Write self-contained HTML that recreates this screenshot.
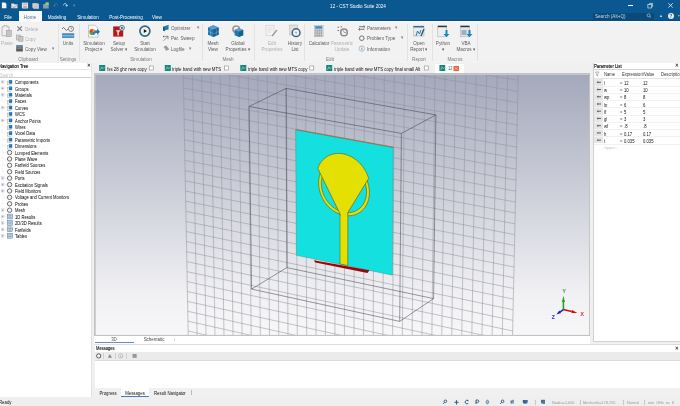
<!DOCTYPE html><html><head><meta charset="utf-8"><style>html,body{margin:0;padding:0;width:680px;height:406px;overflow:hidden;position:relative;background:#f0f0f0;font-family:"Liberation Sans",sans-serif}div{box-sizing:border-box}</style></head><body>
<div style="position:absolute;left:0;top:0;width:680px;height:406px;will-change:transform">
<div style="position:absolute;left:0px;top:0px;width:680px;height:21px;background:#0b5790;"></div>
<div style="position:absolute;left:0px;top:20px;width:680px;height:1px;background:#084a7c;"></div>
<div style="position:absolute;left:-44px;width:200px;text-align:center;top:1.10px;height:10px;line-height:10px;font-size:6.78px;color:#4f7ca6;font-weight:normal;white-space:pre;transform:scaleX(0.885);transform-origin:50% 50%;">↶</div>
<div style="position:absolute;left:-33.599999999999994px;width:200px;text-align:center;top:1.10px;height:10px;line-height:10px;font-size:6.78px;color:#dfe8f0;font-weight:normal;white-space:pre;transform:scaleX(0.885);transform-origin:50% 50%;">↷</div>
<div style="position:absolute;left:-26px;width:200px;text-align:center;top:1.10px;height:10px;line-height:10px;font-size:4.52px;color:#6a92b8;font-weight:normal;white-space:pre;transform:scaleX(0.885);transform-origin:50% 50%;">▾</div>
<div style="position:absolute;left:258.2px;width:200px;text-align:center;top:1.30px;height:10px;line-height:10px;font-size:5.20px;color:#ffffff;font-weight:normal;white-space:pre;transform:scaleX(0.885);transform-origin:50% 50%;letter-spacing:0">12 - CST Studio Suite 2024</div>
<div style="position:absolute;left:627.5px;top:5.2px;width:5.5px;height:0.8px;background:#ffffff;"></div>
<div style="position:absolute;left:593px;top:12.5px;width:61px;height:7px;background:#0a4a7a;"></div>
<div style="position:absolute;left:594.5px;top:11.10px;height:10px;line-height:10px;font-size:5.20px;color:#c7d6e4;font-weight:normal;white-space:pre;transform:scaleX(0.885);transform-origin:0 50%;">Search (Alt+Q)</div>
<div style="position:absolute;left:560.5px;width:200px;text-align:center;top:11.10px;height:10px;line-height:10px;font-size:3.95px;color:#d8e4ee;font-weight:normal;white-space:pre;transform:scaleX(0.885);transform-origin:50% 50%;">▲</div>
<div style="position:absolute;left:668px;top:12.5px;width:6px;height:6px;border-radius:50%;background:#e8eef4"></div>
<div style="position:absolute;left:571px;width:200px;text-align:center;top:10.70px;height:10px;line-height:10px;font-size:5.08px;color:#0b5790;font-weight:bold;white-space:pre;transform:scaleX(0.885);transform-origin:50% 50%;">?</div>
<div style="position:absolute;left:578.5px;width:200px;text-align:center;top:11.10px;height:10px;line-height:10px;font-size:3.95px;color:#9fb9d0;font-weight:normal;white-space:pre;transform:scaleX(0.885);transform-origin:50% 50%;">▾</div>
<div style="position:absolute;left:18.8px;top:11.4px;width:23.2px;height:10.6px;background:#f9f9f9;"></div>
<div style="position:absolute;left:-91.8px;width:200px;text-align:center;top:11.90px;height:10px;line-height:10px;font-size:5.20px;color:#ffffff;font-weight:normal;white-space:pre;transform:scaleX(0.885);transform-origin:50% 50%;">File</div>
<div style="position:absolute;left:-69.7px;width:200px;text-align:center;top:11.90px;height:10px;line-height:10px;font-size:5.20px;color:#4d7398;font-weight:normal;white-space:pre;transform:scaleX(0.885);transform-origin:50% 50%;">Home</div>
<div style="position:absolute;left:-43px;width:200px;text-align:center;top:11.90px;height:10px;line-height:10px;font-size:5.20px;color:#ffffff;font-weight:normal;white-space:pre;transform:scaleX(0.885);transform-origin:50% 50%;">Modeling</div>
<div style="position:absolute;left:-12px;width:200px;text-align:center;top:11.90px;height:10px;line-height:10px;font-size:5.20px;color:#ffffff;font-weight:normal;white-space:pre;transform:scaleX(0.885);transform-origin:50% 50%;">Simulation</div>
<div style="position:absolute;left:25.799999999999997px;width:200px;text-align:center;top:11.90px;height:10px;line-height:10px;font-size:5.20px;color:#ffffff;font-weight:normal;white-space:pre;transform:scaleX(0.885);transform-origin:50% 50%;">Post-Processing</div>
<div style="position:absolute;left:57.30000000000001px;width:200px;text-align:center;top:11.90px;height:10px;line-height:10px;font-size:5.20px;color:#ffffff;font-weight:normal;white-space:pre;transform:scaleX(0.885);transform-origin:50% 50%;">View</div>
<div style="position:absolute;left:0px;top:21px;width:680px;height:41.5px;background:#f2f2f2;"></div>
<div style="position:absolute;left:0px;top:20.8px;width:680px;height:1.4px;background:#fafafa;"></div>
<div style="position:absolute;left:0px;top:62.5px;width:680px;height:0.6px;background:#dcdcdc;"></div>
<div style="position:absolute;left:57.5px;top:23.5px;width:0.6px;height:37.5px;background:#e2e2e2;"></div>
<div style="position:absolute;left:79px;top:23.5px;width:0.6px;height:37.5px;background:#e2e2e2;"></div>
<div style="position:absolute;left:202.3px;top:23.5px;width:0.6px;height:37.5px;background:#e2e2e2;"></div>
<div style="position:absolute;left:254px;top:23.5px;width:0.6px;height:37.5px;background:#e2e2e2;"></div>
<div style="position:absolute;left:304.4px;top:23.5px;width:0.6px;height:37.5px;background:#e2e2e2;"></div>
<div style="position:absolute;left:406.5px;top:23.5px;width:0.6px;height:37.5px;background:#e2e2e2;"></div>
<div style="position:absolute;left:431.5px;top:23.5px;width:0.6px;height:37.5px;background:#e2e2e2;"></div>
<div style="position:absolute;left:477.4px;top:23.5px;width:0.6px;height:37.5px;background:#e2e2e2;"></div>
<div style="position:absolute;left:-72px;width:200px;text-align:center;top:54.10px;height:10px;line-height:10px;font-size:5.20px;color:#7a7a7a;font-weight:normal;white-space:pre;transform:scaleX(0.885);transform-origin:50% 50%;">Clipboard</div>
<div style="position:absolute;left:-32px;width:200px;text-align:center;top:54.10px;height:10px;line-height:10px;font-size:5.20px;color:#7a7a7a;font-weight:normal;white-space:pre;transform:scaleX(0.885);transform-origin:50% 50%;">Settings</div>
<div style="position:absolute;left:40.5px;width:200px;text-align:center;top:54.10px;height:10px;line-height:10px;font-size:5.20px;color:#7a7a7a;font-weight:normal;white-space:pre;transform:scaleX(0.885);transform-origin:50% 50%;">Simulation</div>
<div style="position:absolute;left:128px;width:200px;text-align:center;top:54.10px;height:10px;line-height:10px;font-size:5.20px;color:#7a7a7a;font-weight:normal;white-space:pre;transform:scaleX(0.885);transform-origin:50% 50%;">Mesh</div>
<div style="position:absolute;left:230px;width:200px;text-align:center;top:54.10px;height:10px;line-height:10px;font-size:5.20px;color:#7a7a7a;font-weight:normal;white-space:pre;transform:scaleX(0.885);transform-origin:50% 50%;">Edit</div>
<div style="position:absolute;left:319px;width:200px;text-align:center;top:54.10px;height:10px;line-height:10px;font-size:5.20px;color:#7a7a7a;font-weight:normal;white-space:pre;transform:scaleX(0.885);transform-origin:50% 50%;">Report</div>
<div style="position:absolute;left:354.5px;width:200px;text-align:center;top:54.10px;height:10px;line-height:10px;font-size:5.20px;color:#7a7a7a;font-weight:normal;white-space:pre;transform:scaleX(0.885);transform-origin:50% 50%;">Macros</div>
<div style="position:absolute;left:-93.4px;width:200px;text-align:center;top:38.30px;height:10px;line-height:10px;font-size:5.20px;color:#b0b0b0;font-weight:normal;white-space:pre;transform:scaleX(0.885);transform-origin:50% 50%;">Paste</div>
<div style="position:absolute;left:-32px;width:200px;text-align:center;top:38.30px;height:10px;line-height:10px;font-size:5.20px;color:#5a5a5a;font-weight:normal;white-space:pre;transform:scaleX(0.885);transform-origin:50% 50%;">Units</div>
<div style="position:absolute;left:-6px;width:200px;text-align:center;top:38.30px;height:10px;line-height:10px;font-size:5.20px;color:#5a5a5a;font-weight:normal;white-space:pre;transform:scaleX(0.885);transform-origin:50% 50%;">Simulation</div>
<div style="position:absolute;left:-6px;width:200px;text-align:center;top:44.40px;height:10px;line-height:10px;font-size:5.20px;color:#5a5a5a;font-weight:normal;white-space:pre;transform:scaleX(0.885);transform-origin:50% 50%;">Project ▾</div>
<div style="position:absolute;left:19px;width:200px;text-align:center;top:38.30px;height:10px;line-height:10px;font-size:5.20px;color:#5a5a5a;font-weight:normal;white-space:pre;transform:scaleX(0.885);transform-origin:50% 50%;">Setup</div>
<div style="position:absolute;left:19px;width:200px;text-align:center;top:44.40px;height:10px;line-height:10px;font-size:5.20px;color:#5a5a5a;font-weight:normal;white-space:pre;transform:scaleX(0.885);transform-origin:50% 50%;">Solver ▾</div>
<div style="position:absolute;left:45px;width:200px;text-align:center;top:38.30px;height:10px;line-height:10px;font-size:5.20px;color:#5a5a5a;font-weight:normal;white-space:pre;transform:scaleX(0.885);transform-origin:50% 50%;">Start</div>
<div style="position:absolute;left:45px;width:200px;text-align:center;top:44.40px;height:10px;line-height:10px;font-size:5.20px;color:#5a5a5a;font-weight:normal;white-space:pre;transform:scaleX(0.885);transform-origin:50% 50%;">Simulation</div>
<div style="position:absolute;left:113.30000000000001px;width:200px;text-align:center;top:38.30px;height:10px;line-height:10px;font-size:5.20px;color:#5a5a5a;font-weight:normal;white-space:pre;transform:scaleX(0.885);transform-origin:50% 50%;">Mesh</div>
<div style="position:absolute;left:113.30000000000001px;width:200px;text-align:center;top:44.40px;height:10px;line-height:10px;font-size:5.20px;color:#5a5a5a;font-weight:normal;white-space:pre;transform:scaleX(0.885);transform-origin:50% 50%;">View</div>
<div style="position:absolute;left:137.5px;width:200px;text-align:center;top:38.30px;height:10px;line-height:10px;font-size:5.20px;color:#5a5a5a;font-weight:normal;white-space:pre;transform:scaleX(0.885);transform-origin:50% 50%;">Global</div>
<div style="position:absolute;left:137.5px;width:200px;text-align:center;top:44.40px;height:10px;line-height:10px;font-size:5.20px;color:#5a5a5a;font-weight:normal;white-space:pre;transform:scaleX(0.885);transform-origin:50% 50%;">Properties ▾</div>
<div style="position:absolute;left:171.5px;width:200px;text-align:center;top:38.30px;height:10px;line-height:10px;font-size:5.20px;color:#b0b0b0;font-weight:normal;white-space:pre;transform:scaleX(0.885);transform-origin:50% 50%;">Edit</div>
<div style="position:absolute;left:171.5px;width:200px;text-align:center;top:44.40px;height:10px;line-height:10px;font-size:5.20px;color:#b0b0b0;font-weight:normal;white-space:pre;transform:scaleX(0.885);transform-origin:50% 50%;">Properties</div>
<div style="position:absolute;left:195px;width:200px;text-align:center;top:38.30px;height:10px;line-height:10px;font-size:5.20px;color:#5a5a5a;font-weight:normal;white-space:pre;transform:scaleX(0.885);transform-origin:50% 50%;">History</div>
<div style="position:absolute;left:195px;width:200px;text-align:center;top:44.40px;height:10px;line-height:10px;font-size:5.20px;color:#5a5a5a;font-weight:normal;white-space:pre;transform:scaleX(0.885);transform-origin:50% 50%;">List</div>
<div style="position:absolute;left:218.7px;width:200px;text-align:center;top:38.30px;height:10px;line-height:10px;font-size:5.20px;color:#5a5a5a;font-weight:normal;white-space:pre;transform:scaleX(0.885);transform-origin:50% 50%;">Calculator</div>
<div style="position:absolute;left:242px;width:200px;text-align:center;top:38.30px;height:10px;line-height:10px;font-size:5.20px;color:#b0b0b0;font-weight:normal;white-space:pre;transform:scaleX(0.885);transform-origin:50% 50%;">Parametric</div>
<div style="position:absolute;left:242px;width:200px;text-align:center;top:44.40px;height:10px;line-height:10px;font-size:5.20px;color:#b0b0b0;font-weight:normal;white-space:pre;transform:scaleX(0.885);transform-origin:50% 50%;">Update</div>
<div style="position:absolute;left:319px;width:200px;text-align:center;top:38.30px;height:10px;line-height:10px;font-size:5.20px;color:#5a5a5a;font-weight:normal;white-space:pre;transform:scaleX(0.885);transform-origin:50% 50%;">Open</div>
<div style="position:absolute;left:319px;width:200px;text-align:center;top:44.40px;height:10px;line-height:10px;font-size:5.20px;color:#5a5a5a;font-weight:normal;white-space:pre;transform:scaleX(0.885);transform-origin:50% 50%;">Report ▾</div>
<div style="position:absolute;left:343px;width:200px;text-align:center;top:38.30px;height:10px;line-height:10px;font-size:5.20px;color:#5a5a5a;font-weight:normal;white-space:pre;transform:scaleX(0.885);transform-origin:50% 50%;">Python</div>
<div style="position:absolute;left:343px;width:200px;text-align:center;top:44.40px;height:10px;line-height:10px;font-size:5.20px;color:#5a5a5a;font-weight:normal;white-space:pre;transform:scaleX(0.885);transform-origin:50% 50%;">▾</div>
<div style="position:absolute;left:366px;width:200px;text-align:center;top:38.30px;height:10px;line-height:10px;font-size:5.20px;color:#5a5a5a;font-weight:normal;white-space:pre;transform:scaleX(0.885);transform-origin:50% 50%;">VBA</div>
<div style="position:absolute;left:366px;width:200px;text-align:center;top:44.40px;height:10px;line-height:10px;font-size:5.20px;color:#5a5a5a;font-weight:normal;white-space:pre;transform:scaleX(0.885);transform-origin:50% 50%;">Macros ▾</div>
<div style="position:absolute;left:25px;top:23.60px;height:10px;line-height:10px;font-size:5.20px;color:#b0b0b0;font-weight:normal;white-space:pre;transform:scaleX(0.885);transform-origin:0 50%;">Delete</div>
<div style="position:absolute;left:25px;top:33.70px;height:10px;line-height:10px;font-size:5.20px;color:#b0b0b0;font-weight:normal;white-space:pre;transform:scaleX(0.885);transform-origin:0 50%;">Copy</div>
<div style="position:absolute;left:25px;top:44.10px;height:10px;line-height:10px;font-size:5.20px;color:#5a5a5a;font-weight:normal;white-space:pre;transform:scaleX(0.885);transform-origin:0 50%;">Copy View</div>
<div style="position:absolute;left:-47.5px;width:200px;text-align:center;top:44.10px;height:10px;line-height:10px;font-size:4.52px;color:#777777;font-weight:normal;white-space:pre;transform:scaleX(0.885);transform-origin:50% 50%;">▾</div>
<div style="position:absolute;left:171px;top:22.80px;height:10px;line-height:10px;font-size:5.20px;color:#5a5a5a;font-weight:normal;white-space:pre;transform:scaleX(0.885);transform-origin:0 50%;">Optimizer</div>
<div style="position:absolute;left:98px;width:200px;text-align:center;top:22.80px;height:10px;line-height:10px;font-size:4.52px;color:#777777;font-weight:normal;white-space:pre;transform:scaleX(0.885);transform-origin:50% 50%;">▾</div>
<div style="position:absolute;left:171px;top:33.40px;height:10px;line-height:10px;font-size:5.20px;color:#5a5a5a;font-weight:normal;white-space:pre;transform:scaleX(0.885);transform-origin:0 50%;">Par. Sweep</div>
<div style="position:absolute;left:171px;top:43.80px;height:10px;line-height:10px;font-size:5.20px;color:#5a5a5a;font-weight:normal;white-space:pre;transform:scaleX(0.885);transform-origin:0 50%;">Logfile</div>
<div style="position:absolute;left:90px;width:200px;text-align:center;top:43.80px;height:10px;line-height:10px;font-size:4.52px;color:#777777;font-weight:normal;white-space:pre;transform:scaleX(0.885);transform-origin:50% 50%;">▾</div>
<div style="position:absolute;left:367px;top:23.00px;height:10px;line-height:10px;font-size:5.20px;color:#5a5a5a;font-weight:normal;white-space:pre;transform:scaleX(0.885);transform-origin:0 50%;">Parameters</div>
<div style="position:absolute;left:296px;width:200px;text-align:center;top:23.00px;height:10px;line-height:10px;font-size:4.52px;color:#777777;font-weight:normal;white-space:pre;transform:scaleX(0.885);transform-origin:50% 50%;">▾</div>
<div style="position:absolute;left:367px;top:33.30px;height:10px;line-height:10px;font-size:5.20px;color:#5a5a5a;font-weight:normal;white-space:pre;transform:scaleX(0.885);transform-origin:0 50%;">Problem Type</div>
<div style="position:absolute;left:302px;width:200px;text-align:center;top:33.30px;height:10px;line-height:10px;font-size:4.52px;color:#777777;font-weight:normal;white-space:pre;transform:scaleX(0.885);transform-origin:50% 50%;">▾</div>
<div style="position:absolute;left:367px;top:43.70px;height:10px;line-height:10px;font-size:5.20px;color:#5a5a5a;font-weight:normal;white-space:pre;transform:scaleX(0.885);transform-origin:0 50%;">Information</div>
<div style="position:absolute;left:0px;top:63px;width:680px;height:343px;background:#f0f0f0;"></div>
<div style="position:absolute;left:0px;top:63px;width:91.4px;height:334.4px;background:#ffffff;"></div>
<div style="position:absolute;left:0px;top:397px;width:91.6px;height:0.6px;background:#d8d8d8;"></div>
<div style="position:absolute;left:0px;top:69.3px;width:91.4px;height:0.6px;background:#e6e6e6;"></div>
<div style="position:absolute;left:0px;top:76.8px;width:91.4px;height:0.8px;background:#cfcfcf;"></div>
<div style="position:absolute;left:91.4px;top:63px;width:0.5px;height:334px;background:#e2e2e2;"></div>
<div style="position:absolute;left:-0.9px;top:61.40px;height:10px;line-height:10px;font-size:5.04px;color:#000;font-weight:normal;white-space:pre;transform:scaleX(0.833);transform-origin:0 50%;-webkit-text-stroke:0.12px #000">Navigation Tree</div>
<div style="position:absolute;left:-11.5px;width:200px;text-align:center;top:61.00px;height:10px;line-height:10px;font-size:4.52px;color:#333;font-weight:bold;white-space:pre;transform:scaleX(0.885);transform-origin:50% 50%;">✕</div>
<div style="position:absolute;left:-0.5px;top:69.80px;height:10px;line-height:10px;font-size:4.98px;color:#c4c4c4;font-weight:normal;white-space:pre;transform:scaleX(0.833);transform-origin:0 50%;">Search</div>
<div style="position:absolute;left:15.1px;top:77.10px;height:10px;line-height:10px;font-size:5.19px;color:#000;font-weight:normal;white-space:pre;transform:scaleX(0.800);transform-origin:0 50%;">Components</div>
<div style="position:absolute;left:15.1px;top:83.51px;height:10px;line-height:10px;font-size:5.19px;color:#000;font-weight:normal;white-space:pre;transform:scaleX(0.800);transform-origin:0 50%;">Groups</div>
<div style="position:absolute;left:15.1px;top:89.92px;height:10px;line-height:10px;font-size:5.19px;color:#000;font-weight:normal;white-space:pre;transform:scaleX(0.800);transform-origin:0 50%;">Materials</div>
<div style="position:absolute;left:15.1px;top:96.33px;height:10px;line-height:10px;font-size:5.19px;color:#000;font-weight:normal;white-space:pre;transform:scaleX(0.800);transform-origin:0 50%;">Faces</div>
<div style="position:absolute;left:15.1px;top:102.74px;height:10px;line-height:10px;font-size:5.19px;color:#000;font-weight:normal;white-space:pre;transform:scaleX(0.800);transform-origin:0 50%;">Curves</div>
<div style="position:absolute;left:15.1px;top:109.15px;height:10px;line-height:10px;font-size:5.19px;color:#000;font-weight:normal;white-space:pre;transform:scaleX(0.800);transform-origin:0 50%;">WCS</div>
<div style="position:absolute;left:15.1px;top:115.56px;height:10px;line-height:10px;font-size:5.19px;color:#000;font-weight:normal;white-space:pre;transform:scaleX(0.800);transform-origin:0 50%;">Anchor Points</div>
<div style="position:absolute;left:15.1px;top:121.97px;height:10px;line-height:10px;font-size:5.19px;color:#000;font-weight:normal;white-space:pre;transform:scaleX(0.800);transform-origin:0 50%;">Wires</div>
<div style="position:absolute;left:15.1px;top:128.38px;height:10px;line-height:10px;font-size:5.19px;color:#000;font-weight:normal;white-space:pre;transform:scaleX(0.800);transform-origin:0 50%;">Voxel Data</div>
<div style="position:absolute;left:15.1px;top:134.79px;height:10px;line-height:10px;font-size:5.19px;color:#000;font-weight:normal;white-space:pre;transform:scaleX(0.800);transform-origin:0 50%;">Parametric Imports</div>
<div style="position:absolute;left:15.1px;top:141.20px;height:10px;line-height:10px;font-size:5.19px;color:#000;font-weight:normal;white-space:pre;transform:scaleX(0.800);transform-origin:0 50%;">Dimensions</div>
<div style="position:absolute;left:15.1px;top:147.61px;height:10px;line-height:10px;font-size:5.19px;color:#000;font-weight:normal;white-space:pre;transform:scaleX(0.800);transform-origin:0 50%;">Lumped Elements</div>
<div style="position:absolute;left:15.1px;top:154.02px;height:10px;line-height:10px;font-size:5.19px;color:#000;font-weight:normal;white-space:pre;transform:scaleX(0.800);transform-origin:0 50%;">Plane Wave</div>
<div style="position:absolute;left:15.1px;top:160.43px;height:10px;line-height:10px;font-size:5.19px;color:#000;font-weight:normal;white-space:pre;transform:scaleX(0.800);transform-origin:0 50%;">Farfield Sources</div>
<div style="position:absolute;left:15.1px;top:166.84px;height:10px;line-height:10px;font-size:5.19px;color:#000;font-weight:normal;white-space:pre;transform:scaleX(0.800);transform-origin:0 50%;">Field Sources</div>
<div style="position:absolute;left:15.1px;top:173.25px;height:10px;line-height:10px;font-size:5.19px;color:#000;font-weight:normal;white-space:pre;transform:scaleX(0.800);transform-origin:0 50%;">Ports</div>
<div style="position:absolute;left:15.1px;top:179.66px;height:10px;line-height:10px;font-size:5.19px;color:#000;font-weight:normal;white-space:pre;transform:scaleX(0.800);transform-origin:0 50%;">Excitation Signals</div>
<div style="position:absolute;left:15.1px;top:186.07px;height:10px;line-height:10px;font-size:5.19px;color:#000;font-weight:normal;white-space:pre;transform:scaleX(0.800);transform-origin:0 50%;">Field Monitors</div>
<div style="position:absolute;left:15.1px;top:192.48px;height:10px;line-height:10px;font-size:5.19px;color:#000;font-weight:normal;white-space:pre;transform:scaleX(0.800);transform-origin:0 50%;">Voltage and Current Monitors</div>
<div style="position:absolute;left:15.1px;top:198.89px;height:10px;line-height:10px;font-size:5.19px;color:#000;font-weight:normal;white-space:pre;transform:scaleX(0.800);transform-origin:0 50%;">Probes</div>
<div style="position:absolute;left:15.1px;top:205.30px;height:10px;line-height:10px;font-size:5.19px;color:#000;font-weight:normal;white-space:pre;transform:scaleX(0.800);transform-origin:0 50%;">Mesh</div>
<div style="position:absolute;left:15.1px;top:211.71px;height:10px;line-height:10px;font-size:5.19px;color:#000;font-weight:normal;white-space:pre;transform:scaleX(0.800);transform-origin:0 50%;">1D Results</div>
<div style="position:absolute;left:15.1px;top:218.12px;height:10px;line-height:10px;font-size:5.19px;color:#000;font-weight:normal;white-space:pre;transform:scaleX(0.800);transform-origin:0 50%;">2D/3D Results</div>
<div style="position:absolute;left:15.1px;top:224.53px;height:10px;line-height:10px;font-size:5.19px;color:#000;font-weight:normal;white-space:pre;transform:scaleX(0.800);transform-origin:0 50%;">Farfields</div>
<div style="position:absolute;left:15.1px;top:230.94px;height:10px;line-height:10px;font-size:5.19px;color:#000;font-weight:normal;white-space:pre;transform:scaleX(0.800);transform-origin:0 50%;">Tables</div>
<div style="position:absolute;left:106.8px;top:64.10px;height:10px;line-height:10px;font-size:5.26px;color:#111;font-weight:normal;white-space:pre;transform:scaleX(0.833);transform-origin:0 50%;">fss 28 ghz new copy</div>
<div style="position:absolute;left:172.4px;top:64.10px;height:10px;line-height:10px;font-size:5.26px;color:#111;font-weight:normal;white-space:pre;transform:scaleX(0.833);transform-origin:0 50%;">triple band with new MTS</div>
<div style="position:absolute;left:247.9px;top:64.10px;height:10px;line-height:10px;font-size:5.26px;color:#111;font-weight:normal;white-space:pre;transform:scaleX(0.833);transform-origin:0 50%;">triple band with new MTS copy</div>
<div style="position:absolute;left:333.8px;top:64.10px;height:10px;line-height:10px;font-size:5.26px;color:#111;font-weight:normal;white-space:pre;transform:scaleX(0.833);transform-origin:0 50%;">triple band with new MTS copy final small Alt</div>
<div style="position:absolute;left:434.8px;top:63.5px;width:29.5px;height:9.5px;background:#ffffff;"></div>
<div style="position:absolute;left:448.2px;top:64.10px;height:10px;line-height:10px;font-size:4.80px;color:#445566;font-weight:normal;white-space:pre;transform:scaleX(0.833);transform-origin:0 50%;">12</div>
<div style="position:absolute;left:94.4px;top:72.8px;width:496px;height:263.4px;background:#c2c2c2;"></div>
<div style="position:absolute;left:94.4px;top:336.2px;width:496px;height:8px;background:#ffffff;"></div>
<div style="position:absolute;left:94.6px;top:344px;width:585.4px;height:0.6px;background:#dddddd;"></div>
<div style="position:absolute;left:14px;width:200px;text-align:center;top:334.30px;height:10px;line-height:10px;font-size:5.03px;color:#555;font-weight:normal;white-space:pre;transform:scaleX(0.885);transform-origin:50% 50%;">3D</div>
<div style="position:absolute;left:94.6px;top:342.0px;width:39.6px;height:0.9px;background:#6a90b8;"></div>
<div style="position:absolute;left:54.30000000000001px;width:200px;text-align:center;top:334.30px;height:10px;line-height:10px;font-size:5.03px;color:#444;font-weight:normal;white-space:pre;transform:scaleX(0.885);transform-origin:50% 50%;">Schematic</div>
<div style="position:absolute;left:174px;top:337.5px;width:0.5px;height:3.5px;background:#d4d4d4;"></div>
<div style="position:absolute;left:592.6px;top:63px;width:87.4px;height:279px;background:#ffffff;border-left:0.6px solid #d0d0d0;border-bottom:0.6px solid #d0d0d0;box-sizing:border-box"></div>
<div style="position:absolute;left:594.1px;top:61.40px;height:10px;line-height:10px;font-size:5.10px;color:#000;font-weight:normal;white-space:pre;transform:scaleX(0.833);transform-origin:0 50%;-webkit-text-stroke:0.12px #000">Parameter List</div>
<div style="position:absolute;left:577.3px;width:200px;text-align:center;top:61.00px;height:10px;line-height:10px;font-size:4.52px;color:#333;font-weight:bold;white-space:pre;transform:scaleX(0.885);transform-origin:50% 50%;">✕</div>
<div style="position:absolute;left:593.5px;top:70.1px;width:86.5px;height:8px;background:#ffffff;"></div>
<div style="position:absolute;left:593.5px;top:69.1px;width:86.5px;height:0.9px;background:#d4d4d4;"></div>
<div style="position:absolute;left:603.6px;top:69.10px;height:10px;line-height:10px;font-size:5.04px;color:#333;font-weight:normal;white-space:pre;transform:scaleX(0.833);transform-origin:0 50%;">Name</div>
<div style="position:absolute;left:622.3px;top:69.10px;height:10px;line-height:10px;font-size:5.04px;color:#333;font-weight:normal;white-space:pre;transform:scaleX(0.833);transform-origin:0 50%;">Expression\Value</div>
<div style="position:absolute;left:661.3px;top:69.10px;height:10px;line-height:10px;font-size:5.04px;color:#333;font-weight:normal;white-space:pre;transform:scaleX(0.833);transform-origin:0 50%;">Description</div>
<div style="position:absolute;left:593.5px;top:78.2px;width:86.5px;height:0.6px;background:#e4e4e4;"></div>
<div style="position:absolute;left:593.8px;top:78.8px;width:8.8px;height:64.6px;background:#e6e6e6;"></div>
<div style="position:absolute;left:604.2px;top:77.90px;height:10px;line-height:10px;font-size:5.04px;color:#111;font-weight:normal;white-space:pre;transform:scaleX(0.833);transform-origin:0 50%;">l</div>
<div style="position:absolute;left:620.2px;top:77.90px;height:10px;line-height:10px;font-size:5.04px;color:#777;font-weight:normal;white-space:pre;transform:scaleX(0.833);transform-origin:0 50%;">=</div>
<div style="position:absolute;left:623.8px;top:77.90px;height:10px;line-height:10px;font-size:5.04px;color:#111;font-weight:normal;white-space:pre;transform:scaleX(0.833);transform-origin:0 50%;">12</div>
<div style="position:absolute;left:643.2px;top:77.90px;height:10px;line-height:10px;font-size:5.04px;color:#111;font-weight:normal;white-space:pre;transform:scaleX(0.833);transform-origin:0 50%;">12</div>
<div style="position:absolute;left:593.8px;top:85.8px;width:86.2px;height:0.5px;background:#f2f2f2;"></div>
<div style="position:absolute;left:604.2px;top:85.13px;height:10px;line-height:10px;font-size:5.04px;color:#111;font-weight:normal;white-space:pre;transform:scaleX(0.833);transform-origin:0 50%;">w</div>
<div style="position:absolute;left:620.2px;top:85.13px;height:10px;line-height:10px;font-size:5.04px;color:#777;font-weight:normal;white-space:pre;transform:scaleX(0.833);transform-origin:0 50%;">=</div>
<div style="position:absolute;left:623.8px;top:85.13px;height:10px;line-height:10px;font-size:5.04px;color:#111;font-weight:normal;white-space:pre;transform:scaleX(0.833);transform-origin:0 50%;">10</div>
<div style="position:absolute;left:643.2px;top:85.13px;height:10px;line-height:10px;font-size:5.04px;color:#111;font-weight:normal;white-space:pre;transform:scaleX(0.833);transform-origin:0 50%;">10</div>
<div style="position:absolute;left:593.8px;top:93.03px;width:86.2px;height:0.5px;background:#f2f2f2;"></div>
<div style="position:absolute;left:604.2px;top:92.36px;height:10px;line-height:10px;font-size:5.04px;color:#111;font-weight:normal;white-space:pre;transform:scaleX(0.833);transform-origin:0 50%;">wp</div>
<div style="position:absolute;left:620.2px;top:92.36px;height:10px;line-height:10px;font-size:5.04px;color:#777;font-weight:normal;white-space:pre;transform:scaleX(0.833);transform-origin:0 50%;">=</div>
<div style="position:absolute;left:623.8px;top:92.36px;height:10px;line-height:10px;font-size:5.04px;color:#111;font-weight:normal;white-space:pre;transform:scaleX(0.833);transform-origin:0 50%;">8</div>
<div style="position:absolute;left:643.2px;top:92.36px;height:10px;line-height:10px;font-size:5.04px;color:#111;font-weight:normal;white-space:pre;transform:scaleX(0.833);transform-origin:0 50%;">8</div>
<div style="position:absolute;left:593.8px;top:100.25999999999999px;width:86.2px;height:0.5px;background:#f2f2f2;"></div>
<div style="position:absolute;left:604.2px;top:99.59px;height:10px;line-height:10px;font-size:5.04px;color:#111;font-weight:normal;white-space:pre;transform:scaleX(0.833);transform-origin:0 50%;">lp</div>
<div style="position:absolute;left:620.2px;top:99.59px;height:10px;line-height:10px;font-size:5.04px;color:#777;font-weight:normal;white-space:pre;transform:scaleX(0.833);transform-origin:0 50%;">=</div>
<div style="position:absolute;left:623.8px;top:99.59px;height:10px;line-height:10px;font-size:5.04px;color:#111;font-weight:normal;white-space:pre;transform:scaleX(0.833);transform-origin:0 50%;">6</div>
<div style="position:absolute;left:643.2px;top:99.59px;height:10px;line-height:10px;font-size:5.04px;color:#111;font-weight:normal;white-space:pre;transform:scaleX(0.833);transform-origin:0 50%;">6</div>
<div style="position:absolute;left:593.8px;top:107.49px;width:86.2px;height:0.5px;background:#f2f2f2;"></div>
<div style="position:absolute;left:604.2px;top:106.82px;height:10px;line-height:10px;font-size:5.04px;color:#111;font-weight:normal;white-space:pre;transform:scaleX(0.833);transform-origin:0 50%;">lf</div>
<div style="position:absolute;left:620.2px;top:106.82px;height:10px;line-height:10px;font-size:5.04px;color:#777;font-weight:normal;white-space:pre;transform:scaleX(0.833);transform-origin:0 50%;">=</div>
<div style="position:absolute;left:623.8px;top:106.82px;height:10px;line-height:10px;font-size:5.04px;color:#111;font-weight:normal;white-space:pre;transform:scaleX(0.833);transform-origin:0 50%;">5</div>
<div style="position:absolute;left:643.2px;top:106.82px;height:10px;line-height:10px;font-size:5.04px;color:#111;font-weight:normal;white-space:pre;transform:scaleX(0.833);transform-origin:0 50%;">5</div>
<div style="position:absolute;left:593.8px;top:114.72px;width:86.2px;height:0.5px;background:#f2f2f2;"></div>
<div style="position:absolute;left:604.2px;top:114.05px;height:10px;line-height:10px;font-size:5.04px;color:#111;font-weight:normal;white-space:pre;transform:scaleX(0.833);transform-origin:0 50%;">gl</div>
<div style="position:absolute;left:620.2px;top:114.05px;height:10px;line-height:10px;font-size:5.04px;color:#777;font-weight:normal;white-space:pre;transform:scaleX(0.833);transform-origin:0 50%;">=</div>
<div style="position:absolute;left:623.8px;top:114.05px;height:10px;line-height:10px;font-size:5.04px;color:#111;font-weight:normal;white-space:pre;transform:scaleX(0.833);transform-origin:0 50%;">3</div>
<div style="position:absolute;left:643.2px;top:114.05px;height:10px;line-height:10px;font-size:5.04px;color:#111;font-weight:normal;white-space:pre;transform:scaleX(0.833);transform-origin:0 50%;">3</div>
<div style="position:absolute;left:593.8px;top:121.95px;width:86.2px;height:0.5px;background:#f2f2f2;"></div>
<div style="position:absolute;left:604.2px;top:121.28px;height:10px;line-height:10px;font-size:5.04px;color:#111;font-weight:normal;white-space:pre;transform:scaleX(0.833);transform-origin:0 50%;">wf</div>
<div style="position:absolute;left:620.2px;top:121.28px;height:10px;line-height:10px;font-size:5.04px;color:#777;font-weight:normal;white-space:pre;transform:scaleX(0.833);transform-origin:0 50%;">=</div>
<div style="position:absolute;left:623.8px;top:121.28px;height:10px;line-height:10px;font-size:5.04px;color:#111;font-weight:normal;white-space:pre;transform:scaleX(0.833);transform-origin:0 50%;">.8</div>
<div style="position:absolute;left:643.2px;top:121.28px;height:10px;line-height:10px;font-size:5.04px;color:#111;font-weight:normal;white-space:pre;transform:scaleX(0.833);transform-origin:0 50%;">.8</div>
<div style="position:absolute;left:593.8px;top:129.18px;width:86.2px;height:0.5px;background:#f2f2f2;"></div>
<div style="position:absolute;left:604.2px;top:128.51px;height:10px;line-height:10px;font-size:5.04px;color:#111;font-weight:normal;white-space:pre;transform:scaleX(0.833);transform-origin:0 50%;">h</div>
<div style="position:absolute;left:620.2px;top:128.51px;height:10px;line-height:10px;font-size:5.04px;color:#777;font-weight:normal;white-space:pre;transform:scaleX(0.833);transform-origin:0 50%;">=</div>
<div style="position:absolute;left:623.8px;top:128.51px;height:10px;line-height:10px;font-size:5.04px;color:#111;font-weight:normal;white-space:pre;transform:scaleX(0.833);transform-origin:0 50%;">0.17</div>
<div style="position:absolute;left:643.2px;top:128.51px;height:10px;line-height:10px;font-size:5.04px;color:#111;font-weight:normal;white-space:pre;transform:scaleX(0.833);transform-origin:0 50%;">0.17</div>
<div style="position:absolute;left:593.8px;top:136.41px;width:86.2px;height:0.5px;background:#f2f2f2;"></div>
<div style="position:absolute;left:604.2px;top:135.74px;height:10px;line-height:10px;font-size:5.04px;color:#111;font-weight:normal;white-space:pre;transform:scaleX(0.833);transform-origin:0 50%;">t</div>
<div style="position:absolute;left:620.2px;top:135.74px;height:10px;line-height:10px;font-size:5.04px;color:#777;font-weight:normal;white-space:pre;transform:scaleX(0.833);transform-origin:0 50%;">=</div>
<div style="position:absolute;left:623.8px;top:135.74px;height:10px;line-height:10px;font-size:5.04px;color:#111;font-weight:normal;white-space:pre;transform:scaleX(0.833);transform-origin:0 50%;">0.035</div>
<div style="position:absolute;left:643.2px;top:135.74px;height:10px;line-height:10px;font-size:5.04px;color:#111;font-weight:normal;white-space:pre;transform:scaleX(0.833);transform-origin:0 50%;">0.035</div>
<div style="position:absolute;left:593.8px;top:143.64px;width:86.2px;height:0.5px;background:#f2f2f2;"></div>
<div style="position:absolute;left:604px;top:143.20px;height:10px;line-height:10px;font-size:4.07px;color:#bdbdbd;font-weight:normal;white-space:pre;transform:scaleX(0.885);transform-origin:0 50%;">&lt;type&gt;...</div>
<div style="position:absolute;left:94.6px;top:344.6px;width:585.4px;height:52.6px;background:#ffffff;"></div>
<div style="position:absolute;left:95.7px;top:343.50px;height:10px;line-height:10px;font-size:4.92px;color:#000;font-weight:normal;white-space:pre;transform:scaleX(0.833);transform-origin:0 50%;-webkit-text-stroke:0.08px #000">Messages</div>
<div style="position:absolute;left:577px;width:200px;text-align:center;top:343.70px;height:10px;line-height:10px;font-size:4.52px;color:#333;font-weight:bold;white-space:pre;transform:scaleX(0.885);transform-origin:50% 50%;">✕</div>
<div style="position:absolute;left:94.6px;top:352.2px;width:585.4px;height:7.6px;background:#ebebeb;"></div>
<div style="position:absolute;left:94.6px;top:359.8px;width:585.4px;height:0.5px;background:#dcdcdc;"></div>
<div style="position:absolute;left:102.5px;top:352.8px;width:0.5px;height:6px;background:#d0d0d0;"></div>
<div style="position:absolute;left:114.5px;top:352.8px;width:0.5px;height:6px;background:#d0d0d0;"></div>
<div style="position:absolute;left:125.5px;top:352.8px;width:0.5px;height:6px;background:#d0d0d0;"></div>
<div style="position:absolute;left:94.6px;top:388.2px;width:585.4px;height:9px;background:#f0f0f0;"></div>
<div style="position:absolute;left:120.8px;top:388.2px;width:27.9px;height:8.5px;background:#ffffff;"></div>
<div style="position:absolute;left:120.8px;top:396.2px;width:27.9px;height:0.7px;background:#4a7bb0;"></div>
<div style="position:absolute;left:7.599999999999994px;width:200px;text-align:center;top:388.70px;height:10px;line-height:10px;font-size:4.86px;color:#111;font-weight:normal;white-space:pre;transform:scaleX(0.885);transform-origin:50% 50%;">Progress</div>
<div style="position:absolute;left:34.80000000000001px;width:200px;text-align:center;top:388.80px;height:10px;line-height:10px;font-size:4.86px;color:#111;font-weight:normal;white-space:pre;transform:scaleX(0.885);transform-origin:50% 50%;">Messages</div>
<div style="position:absolute;left:154px;top:388.70px;height:10px;line-height:10px;font-size:4.86px;color:#111;font-weight:normal;white-space:pre;transform:scaleX(0.885);transform-origin:0 50%;">Result Navigator</div>
<div style="position:absolute;left:190.5px;top:390px;width:0.5px;height:5px;background:#bbbbbb;"></div>
<div style="position:absolute;left:0px;top:397.2px;width:680px;height:8.8px;background:#efefef;"></div>
<div style="position:absolute;left:-0.8px;top:398.10px;height:10px;line-height:10px;font-size:4.86px;color:#111;font-weight:normal;white-space:pre;transform:scaleX(0.885);transform-origin:0 50%;">Ready</div>
<div style="position:absolute;left:551.5px;top:397.70px;height:10px;line-height:10px;font-size:4.24px;color:#9a9a9a;font-weight:normal;white-space:pre;transform:scaleX(0.885);transform-origin:0 50%;">Nodes=1,000</div>
<div style="position:absolute;left:583.3px;top:397.70px;height:10px;line-height:10px;font-size:4.24px;color:#9a9a9a;font-weight:normal;white-space:pre;transform:scaleX(0.885);transform-origin:0 50%;">Meshcells=178,720</div>
<div style="position:absolute;left:626.5px;top:397.70px;height:10px;line-height:10px;font-size:4.24px;color:#9a9a9a;font-weight:normal;white-space:pre;transform:scaleX(0.885);transform-origin:0 50%;">Normal</div>
<div style="position:absolute;left:647.5px;top:397.70px;height:10px;line-height:10px;font-size:4.24px;color:#9a9a9a;font-weight:normal;white-space:pre;transform:scaleX(0.885);transform-origin:0 50%;">mm  GHz  ns  K</div>
<div style="position:absolute;left:535px;top:399.5px;width:0.5px;height:5px;background:#c8c8c8;"></div>
<div style="position:absolute;left:580px;top:399.5px;width:0.5px;height:5px;background:#c8c8c8;"></div>
<div style="position:absolute;left:623px;top:399.5px;width:0.5px;height:5px;background:#c8c8c8;"></div>
<div style="position:absolute;left:644px;top:399.5px;width:0.5px;height:5px;background:#c8c8c8;"></div>
<svg style="position:absolute;left:0;top:0" width="680" height="406" viewBox="0 0 680 406"><defs><linearGradient id="bg" x1="0" y1="0" x2="0" y2="1"><stop offset="0" stop-color="#a3a8bb"/><stop offset="0.5" stop-color="#d1d3dc"/><stop offset="0.85" stop-color="#f1f1f4"/><stop offset="1" stop-color="#f7f7f8"/></linearGradient><clipPath id="vc"><rect x="95.7" y="73.9" width="493.40000000000003" height="261.0"/></clipPath></defs><rect x="95.7" y="73.9" width="493.40000000000003" height="261.0" fill="url(#bg)"/><g clip-path="url(#vc)"><path d="M181.54 -17.63L189.05 379.79M190.85 -16.18L197.92 381.89M200.19 -14.73L206.83 384.00M209.56 -13.27L215.76 386.11M218.97 -11.80L224.73 388.24M228.42 -10.33L233.73 390.37M237.91 -8.85L242.77 392.51M247.43 -7.37L251.84 394.65M256.98 -5.88L260.94 396.81M266.58 -4.38L270.07 398.97M276.21 -2.88L279.24 401.14M285.88 -1.38L288.44 403.32M295.59 0.14L297.68 405.51M305.33 1.65L306.95 407.71M315.11 3.18L316.25 409.91M324.93 4.71L325.59 412.12M334.79 6.25L334.96 414.34M344.69 7.79L344.37 416.57M354.63 9.34L353.82 418.80M364.60 10.89L363.30 421.05M374.62 12.45L372.81 423.30M384.68 14.02L382.36 425.56M394.77 15.59L391.95 427.83M404.91 17.17L401.57 430.11M415.08 18.76L411.23 432.40M425.30 20.35L420.93 434.70M435.56 21.95L430.66 437.00M445.85 23.55L440.43 439.31M456.19 25.16L450.24 441.64M466.58 26.78L460.08 443.97M477.00 28.40L469.97 446.31M487.46 30.03L479.89 448.66M497.97 31.67L489.84 451.02M508.52 33.31L499.84 453.38M519.12 34.96L509.88 455.76M181.54 -17.63L519.12 34.96M181.74 -6.94L518.87 46.32M181.95 3.72L518.62 57.64M182.15 14.35L518.37 68.94M182.35 24.96L518.12 80.20M182.55 35.54L517.88 91.43M182.75 46.09L517.63 102.63M182.95 56.62L517.38 113.80M183.14 67.12L517.14 124.93M183.34 77.59L516.90 136.04M183.54 88.04L516.65 147.12M183.74 98.46L516.41 158.17M183.93 108.85L516.17 169.19M184.13 119.21L515.93 180.17M184.32 129.55L515.69 191.13M184.52 139.87L515.45 202.06M184.71 150.15L515.21 212.96M184.91 160.42L514.97 223.83M185.10 170.65L514.73 234.67M185.29 180.86L514.49 245.48M185.49 191.05L514.26 256.26M185.68 201.20L514.02 267.02M185.87 211.34L513.78 277.74M186.06 221.45L513.55 288.44M186.25 231.53L513.32 299.10M186.44 241.58L513.08 309.74M186.63 251.62L512.85 320.35M186.82 261.62L512.62 330.94M187.01 271.61L512.39 341.49M187.20 281.56L512.15 352.02M187.38 291.49L511.92 362.51M187.57 301.40L511.69 372.98M187.76 311.29L511.46 383.43M187.94 321.14L511.24 393.84M188.13 330.98L511.01 404.23M188.32 340.79L510.78 414.59M188.50 350.57L510.55 424.92M188.69 360.34L510.33 435.23M188.87 370.07L510.10 445.51M189.05 379.79L509.88 455.76" stroke="#8e9098" stroke-opacity="0.68" stroke-width="0.75" fill="none"/><polygon points="295.68,129.67 393.27,147.41 392.41,275.17 296.34,255.30" fill="#14e0e0" stroke="#3a8a80" stroke-width="0.4"/><path d="M295.68 129.67 L393.27 147.41" stroke="#9a6a3a" stroke-width="0.8"/><path d="M369.41 192.68L369.30 195.08L369.00 197.43L368.51 199.70L367.83 201.87L366.97 203.94L365.93 205.88L364.72 207.68L363.36 209.32L361.85 210.81L360.20 212.11L358.43 213.23L356.55 214.15L354.58 214.88L352.53 215.39L350.42 215.70L348.25 215.79L346.06 215.67L343.85 215.34L341.65 214.80L339.46 214.06L337.31 213.12L335.21 211.98L333.17 210.67L331.22 209.18L329.36 207.53L327.62 205.74L326.00 203.80L324.51 201.75L323.17 199.59L321.99 197.34L320.97 195.02L320.13 192.65L319.46 190.23L318.98 187.80L318.69 185.37L318.59 182.95L318.68 180.57L318.96 178.24L319.43 175.99L320.09 173.82L320.92 171.75L321.93 169.81L323.11 168.00L324.45 166.33L325.94 164.83L327.56 163.51L329.31 162.36L331.18 161.41L333.14 160.66L335.19 160.11L337.30 159.78L339.47 159.66L341.67 159.75L343.89 160.06L346.11 160.58L348.32 161.30L350.50 162.24L352.62 163.36L354.68 164.68L356.66 166.17L358.55 167.83L360.32 169.64L361.96 171.59L363.47 173.67L364.83 175.85L366.02 178.13L367.05 180.48L367.90 182.88L368.56 185.33L369.04 187.79L369.32 190.24ZM366.49 189.97L366.24 187.79L365.82 185.60L365.22 183.43L364.47 181.29L363.56 179.20L362.49 177.18L361.29 175.24L359.95 173.39L358.49 171.66L356.91 170.05L355.24 168.57L353.48 167.25L351.65 166.08L349.76 165.08L347.83 164.25L345.87 163.60L343.89 163.14L341.91 162.86L339.96 162.78L338.03 162.88L336.15 163.18L334.33 163.66L332.58 164.33L330.93 165.18L329.37 166.19L327.92 167.37L326.60 168.71L325.41 170.18L324.36 171.79L323.46 173.52L322.71 175.36L322.13 177.29L321.71 179.30L321.46 181.37L321.37 183.49L321.46 185.64L321.72 187.80L322.15 189.96L322.74 192.11L323.49 194.23L324.40 196.29L325.45 198.29L326.64 200.21L327.97 202.04L329.41 203.76L330.96 205.36L332.61 206.83L334.35 208.15L336.16 209.32L338.03 210.33L339.95 211.16L341.89 211.82L343.85 212.30L345.82 212.59L347.77 212.70L349.69 212.61L351.57 212.34L353.40 211.88L355.15 211.24L356.82 210.41L358.39 209.42L359.85 208.26L361.20 206.94L362.41 205.47L363.48 203.87L364.40 202.14L365.17 200.31L365.77 198.37L366.21 196.36L366.48 194.27L366.57 192.14Z" fill="#e4e004" fill-rule="evenodd" stroke="#5e6a2a" stroke-width="0.7"/><polygon points="340.09,209.67 347.82,211.19 347.76,265.42 340.07,263.83" fill="#e4e004" stroke="#5e6a2a" stroke-width="0.7"/><path d="M343.17 220.23L317.74 168.35L318.35 166.80L319.06 165.31L319.86 163.89L320.74 162.54L321.71 161.27L322.75 160.08L323.88 158.98L325.07 157.96L326.34 157.04L327.66 156.22L329.05 155.50L330.49 154.88L331.97 154.37L333.50 153.96L335.07 153.67L336.66 153.49L338.28 153.42L339.92 153.46L341.58 153.61L343.24 153.88L344.90 154.25L346.55 154.74L348.19 155.33L349.81 156.03L351.41 156.84L352.98 157.74L354.51 158.74L356.00 159.83L357.44 161.01L358.82 162.28L360.15 163.63L361.41 165.05L362.60 166.54L363.72 168.09L364.77 169.70L365.73 171.37L366.60 173.08L367.39 174.82L368.08 176.60L368.68 178.41Z" fill="#e4e004" stroke="#5e6a2a" stroke-width="0.7"/><polygon points="340.76,206.66 347.15,207.91 347.09,264.76 340.75,263.45" fill="#e4e004"/><polygon points="313.6,260.2 369.6,270.3 367.4,273.0 315.4,262.6" fill="#9a0606"/><path d="M249.1 106.5L401.4 133.4M401.4 133.4L399.7 321.4M399.7 321.4L251.6 289.1M251.6 289.1L249.1 106.5M286.1 88.4L435.9 114.9M435.9 114.9L433.6 298.6M433.6 298.6L286.8 267.6M286.8 267.6L286.1 88.4M249.1 106.5L286.1 88.4M401.4 133.4L435.9 114.9M251.6 289.1L286.8 267.6M399.7 321.4L433.6 298.6" stroke="#404048" stroke-opacity="0.75" stroke-width="0.7" fill="none"/></g><rect x="95.7" y="73.9" width="493.40000000000003" height="1" fill="#d4d4d8" fill-opacity="0.8"/><path d="M563.4 309.6 L563.40 302.01" stroke="#12a812" stroke-width="1.5"/><path d="M564.90 302.01 L563.4 295.8 L561.90 302.01z" fill="#12a812"/><path d="M563.4 309.6 L571.80 311.58" stroke="#c01414" stroke-width="1.5"/><path d="M571.46 313.04 L577.4 312.9 L572.14 310.12z" fill="#c01414"/><path d="M563.4 309.6 L560.25 311.76" stroke="#1a1ab8" stroke-width="1.5"/><path d="M559.40 310.52 L556.4 314.4 L561.10 313.00z" fill="#1a1ab8"/><text x="564.2" y="292.8" font-size="5" fill="#22a022" stroke="#22a022" stroke-width="0.15" text-anchor="middle" font-family="Liberation Sans">Y</text><text x="582.2" y="315.8" font-size="5" fill="#d81c1c" stroke="#d81c1c" stroke-width="0.15" text-anchor="middle" font-family="Liberation Sans">X</text><text x="553.2" y="318.6" font-size="5" fill="#2222d8" stroke="#2222d8" stroke-width="0.15" text-anchor="middle" font-family="Liberation Sans">Z</text></svg>
<svg style="position:absolute;left:0;top:0" width="680" height="406" viewBox="0 0 680 406"><path d="M1.9 2.5 h3.2 l1.3 1.3 v4.5 h-4.5z" fill="#f4f2ee"/><path d="M11.3 3.4 h2.4 l0.8 0.8 h3 v4 h-6.2z" fill="#e9dcdc"/><path d="M12.6 6.6 l1.5 1.2 l3 -3.2" stroke="#5f8fc0" stroke-width="0.7" fill="none"/><rect x="21.9" y="2.6" width="6.2" height="5.8" fill="#e6dede"/><rect x="22.8" y="3.2" width="4.4" height="2" fill="#c9c0c0"/><rect x="23.2" y="6" width="3.6" height="2.4" fill="#b8b0b0"/><rect x="32.4" y="3.2" width="5.2" height="4.6" fill="#d8c8c4"/><rect x="33.6" y="4" width="5.2" height="4.6" fill="#d0c2bc" stroke="#e6dada" stroke-width="0.4"/><rect x="43.1" y="4" width="5.6" height="4.5" fill="#8a9aae"/><path d="M45.5 2.4 h3.3 v2.2 h-3.3z" fill="#b8cc50"/><rect x="647.9" y="4.4" width="3.6" height="3.6" fill="none" stroke="#fff" stroke-width="0.6"/><path d="M649.1 3.4 h3.5 v3.5" fill="none" stroke="#fff" stroke-width="0.6"/><path d="M668.4 3.2 L672.8 7.6 M672.8 3.2 L668.4 7.6" stroke="#fff" stroke-width="0.75"/><circle cx="648.6" cy="15.3" r="1.5" fill="none" stroke="#c7d6e4" stroke-width="0.6"/><path d="M649.7 16.4 l1.3 1.3" stroke="#c7d6e4" stroke-width="0.7"/><path d="M2 26.8 h2 v-1.2 h3 v1.2 h2 v9 h-7z" fill="#f0f0f0" stroke="#a8a8a8" stroke-width="0.8"/><rect x="6.2" y="30.2" width="5.2" height="6.4" fill="#c4c4c4" stroke="#9c9c9c" stroke-width="0.5"/><path d="M17.4 26.4 L21.9 30.9 M21.9 26.4 L17.4 30.9" stroke="#777" stroke-width="1.1"/><rect x="16.3" y="35" width="4.2" height="5" fill="#d8d8d8" stroke="#a0a0a0" stroke-width="0.6"/><rect x="18.8" y="36.4" width="4.2" height="4.8" fill="#c8c8c8" stroke="#9a9a9a" stroke-width="0.6"/><rect x="16.2" y="45.2" width="6.6" height="1.5" fill="#3d6f9c"/><rect x="16.2" y="46.7" width="6.6" height="4.8" fill="#5a5a5a"/><rect x="16.8" y="47.4" width="5.4" height="1.4" fill="#8a8a8a"/><path d="M62 29 q1.5 -3 3 0 t3 0" stroke="#555" stroke-width="0.8" fill="none"/><circle cx="71" cy="28.8" r="2.6" fill="#f3f3f3" stroke="#555" stroke-width="0.7"/><path d="M71 27.3 v1.5 h1.2" stroke="#555" stroke-width="0.5" fill="none"/><rect x="62" y="33.2" width="12.2" height="4.8" fill="#4a8fbf"/><rect x="62" y="35.2" width="12.2" height="1.2" fill="#86bde0"/><path d="M88.5 25.2 h6.5 l3 3 v9 h-9.5 z" fill="#f7f7f7" stroke="#9a9a9a" stroke-width="0.5"/><circle cx="92.5" cy="32" r="3" fill="#e9a020"/><path d="M92.5 32 L89.5 32 A3 3 0 0 1 92.5 29 z" fill="#e23c2a"/><path d="M92.5 32 L92.5 35 A3 3 0 0 1 89.5 32 z" fill="#3aa845"/><path d="M92.5 32 L95.5 32 A3 3 0 0 1 92.5 35 z" fill="#2a7fd4"/><path d="M94.5 30.5 h2.5 v-1.8 l3 3 l-3 3 v-1.8 h-2.5 z" fill="#1c7cc0"/><rect x="113.2" y="26.4" width="10" height="10.2" fill="#b81818"/><path d="M115.8 30.2 h4.6 l-1.6 2.2 v3 h-1.4 v-3 z" fill="#f3e2e2"/><circle cx="121.9" cy="27.9" r="2.5" fill="#dfe6ea" stroke="#4f7f96" stroke-width="1"/><circle cx="121.9" cy="27.9" r="0.9" fill="#333"/><circle cx="144.9" cy="31.1" r="5.0" fill="#f2f2f2" stroke="#2c6a8c" stroke-width="1.7"/><circle cx="144.9" cy="31.1" r="3.5" fill="#f6f2ea"/><path d="M143.8 29.2 L147 31.1 L143.8 33 z" fill="#111"/><path d="M163 26.8 l5.6 -2 v4.6 l-5.6 1.4 z" fill="#2a7ab0"/><path d="M163 26.8 l1.8 0.3 v4.2 l-1.8 -0.5z" fill="#1a5a7a"/><path d="M163.5 40.8 l4.5 -4.5 M165 36.3 h3 v3" stroke="#555" stroke-width="0.6" fill="none"/><circle cx="163.8" cy="36.6" r="0.8" fill="#555"/><path d="M163.8 46.5 l2.5 -1 l3 4 l-2.5 1 z" fill="#9a9a9a"/><path d="M164 46.8 l2.6 4.2" stroke="#777" stroke-width="0.5"/><path d="M208 27.5 l5.3 -2.3 l5.3 2.3 v7.3 l-5.3 2.2 l-5.3 -2.2 z" fill="#2576aa"/><path d="M208 27.5 l5.3 2.3 l5.3 -2.3 l-5.3 -2.3 z" fill="#5a9fcf"/><path d="M213.3 29.8 v7.2 l5.3 -2.2 v-7.3 z" fill="#1a5e8e"/><path d="M210.7 28.8 v7.5 M216.3 28.8 v7.5 M208 31.3 l5.5 2.5 l5.5 -2.5" stroke="#a9d6f2" stroke-width="0.35" fill="none"/><circle cx="236.2" cy="29.2" r="3.2" fill="none" stroke="#9a9a9a" stroke-width="1.7"/><path d="M234.6 30 l4.3 -1.8 l4.3 1.8 v5.3 l-4.3 1.7 l-4.3 -1.7 z" fill="#2576aa"/><path d="M234.6 30 l4.3 1.8 l4.3 -1.8 l-4.3 -1.8 z" fill="#5a9fcf"/><path d="M238.9 31.8 v5.2 l4.3 -1.7 v-5.3 z" fill="#1a5e8e"/><rect x="266" y="25.5" width="8" height="10" fill="#f4f4f4" stroke="#c4c4c4" stroke-width="0.5"/><path d="M267.5 28 h5 M267.5 30 h5 M267.5 32 h3" stroke="#c8c8c8" stroke-width="0.5"/><path d="M272 36 l5 -6" stroke="#9d9d9d" stroke-width="1.3"/><rect x="289.3" y="25" width="8.4" height="10" fill="#e4dede" stroke="#c0b8b8" stroke-width="0.5"/><circle cx="296.1" cy="32.7" r="3.9" fill="#eef0f2" stroke="#3a6680" stroke-width="1.5"/><path d="M295.8 31.6 v1.4 h1.2" stroke="#333" stroke-width="0.45" fill="none"/><rect x="314.3" y="25.3" width="8.8" height="11.5" fill="#dadada" stroke="#b0b0b0" stroke-width="0.5"/><rect x="315.2" y="26.2" width="7" height="2.5" fill="#3a8fd0"/><rect x="315.20" y="29.60" width="1.4" height="1.3" fill="#9a9a9a"/><rect x="315.20" y="31.40" width="1.4" height="1.3" fill="#9a9a9a"/><rect x="315.20" y="33.20" width="1.4" height="1.3" fill="#9a9a9a"/><rect x="315.20" y="35.00" width="1.4" height="1.3" fill="#9a9a9a"/><rect x="317.05" y="29.60" width="1.4" height="1.3" fill="#9a9a9a"/><rect x="317.05" y="31.40" width="1.4" height="1.3" fill="#9a9a9a"/><rect x="317.05" y="33.20" width="1.4" height="1.3" fill="#9a9a9a"/><rect x="317.05" y="35.00" width="1.4" height="1.3" fill="#9a9a9a"/><rect x="318.90" y="29.60" width="1.4" height="1.3" fill="#9a9a9a"/><rect x="318.90" y="31.40" width="1.4" height="1.3" fill="#9a9a9a"/><rect x="318.90" y="33.20" width="1.4" height="1.3" fill="#9a9a9a"/><rect x="318.90" y="35.00" width="1.4" height="1.3" fill="#9a9a9a"/><rect x="320.75" y="29.60" width="1.4" height="1.3" fill="#9a9a9a"/><rect x="320.75" y="31.40" width="1.4" height="1.3" fill="#9a9a9a"/><rect x="320.75" y="33.20" width="1.4" height="1.3" fill="#9a9a9a"/><rect x="320.75" y="35.00" width="1.4" height="1.3" fill="#9a9a9a"/><circle cx="344" cy="32.4" r="3.3" fill="none" stroke="#8a8a8a" stroke-width="1.5"/><path d="M337.5 27.2 h1.6 M340.5 26.8 h1.5 M337.5 30.5 h1.6" stroke="#777" stroke-width="1.1"/><path d="M343.4 30.5 l0.8 2 l1.8 0" stroke="#888" stroke-width="0.8" fill="none"/><path d="M359 26.7 h5.5 M359 29.3 h5.5" stroke="#444" stroke-width="0.7"/><path d="M363.5 25.5 l1.5 1.2 l-1.5 1.2 M360 28.1 l-1.5 1.2 l1.5 1.2" stroke="#444" stroke-width="0.6" fill="none"/><circle cx="361.8" cy="38.2" r="2.3" fill="none" stroke="#666" stroke-width="0.9"/><circle cx="361.8" cy="48.6" r="2.7" fill="#f0f4f8" stroke="#8a9bb0" stroke-width="0.6"/><path d="M361.8 47.6 v2.6" stroke="#4a7aa6" stroke-width="0.7"/><circle cx="361.8" cy="46.8" r="0.4" fill="#4a7aa6"/><rect x="413.5" y="26" width="10.5" height="10" fill="#eaeaea" stroke="#a9a9a9" stroke-width="0.5"/><rect x="413.5" y="26" width="10.5" height="1.5" fill="#3b6e94"/><path d="M416 36 l1.5 -5 l2 3 l1.5 -4" stroke="#2e7bb0" stroke-width="1" fill="none"/><path d="M421 36 l3 -7" stroke="#1e5a88" stroke-width="1.4"/><rect x="437.8" y="25.8" width="9" height="11" fill="#eceff2" stroke="#a7a7a7" stroke-width="0.5"/><rect x="437.8" y="25.8" width="9" height="1.4" fill="#333"/><path d="M445.5 30 v4 h-2 l3 3.2 l3 -3.2 h-2 v-4 z" fill="#1d86b8"/><rect x="460.5" y="25.8" width="9" height="11" fill="#dfe6ec" stroke="#a7a7a7" stroke-width="0.5"/><rect x="460.5" y="25.8" width="9" height="1.4" fill="#333"/><rect x="461.5" y="30" width="5" height="5" fill="#9bb0c2"/><path d="M468.5 30 v4 h-2 l3 3.2 l3 -3.2 h-2 v-4 z" fill="#1d86b8"/><rect x="1.2" y="80.60" width="2.8" height="2.8" fill="#f4f4f8" stroke="#c8c8d4" stroke-width="0.35"/><path d="M1.7 82.00 h1.8 M2.6 81.10 v1.8" stroke="#7a7a90" stroke-width="0.45"/><path d="M4.2 81.90 h2.5" stroke="#c8c8c8" stroke-width="0.4" stroke-dasharray="0.5 0.5"/><rect x="7.3" y="81.10" width="3.8" height="3.8" fill="#f2f2f2" stroke="#a8a8a8" stroke-width="0.5"/><rect x="8.9" y="80.10" width="3.3" height="3.5" fill="#2272b4"/><rect x="9.3" y="80.50" width="1.4" height="1.2" fill="#4a9ad0"/><rect x="1.2" y="87.01" width="2.8" height="2.8" fill="#f4f4f8" stroke="#c8c8d4" stroke-width="0.35"/><path d="M1.7 88.41 h1.8 M2.6 87.51 v1.8" stroke="#7a7a90" stroke-width="0.45"/><path d="M4.2 88.31 h2.5" stroke="#c8c8c8" stroke-width="0.4" stroke-dasharray="0.5 0.5"/><rect x="7.3" y="87.51" width="3.8" height="3.8" fill="#f2f2f2" stroke="#a8a8a8" stroke-width="0.5"/><rect x="8.9" y="86.51" width="3.3" height="3.5" fill="#2272b4"/><rect x="9.3" y="86.91" width="1.4" height="1.2" fill="#4a9ad0"/><rect x="1.2" y="93.42" width="2.8" height="2.8" fill="#f4f4f8" stroke="#c8c8d4" stroke-width="0.35"/><path d="M1.7 94.82 h1.8 M2.6 93.92 v1.8" stroke="#7a7a90" stroke-width="0.45"/><path d="M4.2 94.72 h2.5" stroke="#c8c8c8" stroke-width="0.4" stroke-dasharray="0.5 0.5"/><rect x="7.3" y="93.92" width="3.8" height="3.8" fill="#f2f2f2" stroke="#a8a8a8" stroke-width="0.5"/><rect x="8.9" y="92.92" width="3.3" height="3.5" fill="#2272b4"/><rect x="9.3" y="93.32" width="1.4" height="1.2" fill="#4a9ad0"/><path d="M2.6 97.93 v3.2 h4" stroke="#c8c8c8" stroke-width="0.4" stroke-dasharray="0.5 0.5" fill="none"/><rect x="7.3" y="100.33" width="3.8" height="3.8" fill="#f2f2f2" stroke="#a8a8a8" stroke-width="0.5"/><rect x="8.9" y="99.33" width="3.3" height="3.5" fill="#2272b4"/><rect x="9.3" y="99.73" width="1.4" height="1.2" fill="#4a9ad0"/><rect x="1.2" y="106.24" width="2.8" height="2.8" fill="#f4f4f8" stroke="#c8c8d4" stroke-width="0.35"/><path d="M1.7 107.64 h1.8 M2.6 106.74 v1.8" stroke="#7a7a90" stroke-width="0.45"/><path d="M4.2 107.54 h2.5" stroke="#c8c8c8" stroke-width="0.4" stroke-dasharray="0.5 0.5"/><rect x="7.3" y="106.74" width="3.8" height="3.8" fill="#f2f2f2" stroke="#a8a8a8" stroke-width="0.5"/><rect x="8.9" y="105.74" width="3.3" height="3.5" fill="#2272b4"/><rect x="9.3" y="106.14" width="1.4" height="1.2" fill="#4a9ad0"/><path d="M2.6 110.75 v3.2 h4" stroke="#c8c8c8" stroke-width="0.4" stroke-dasharray="0.5 0.5" fill="none"/><rect x="7.3" y="113.15" width="3.8" height="3.8" fill="#f2f2f2" stroke="#a8a8a8" stroke-width="0.5"/><rect x="8.9" y="112.15" width="3.3" height="3.5" fill="#2272b4"/><rect x="9.3" y="112.55" width="1.4" height="1.2" fill="#4a9ad0"/><rect x="1.2" y="119.06" width="2.8" height="2.8" fill="#f4f4f8" stroke="#c8c8d4" stroke-width="0.35"/><path d="M1.7 120.46 h1.8 M2.6 119.56 v1.8" stroke="#7a7a90" stroke-width="0.45"/><path d="M4.2 120.36 h2.5" stroke="#c8c8c8" stroke-width="0.4" stroke-dasharray="0.5 0.5"/><rect x="7.3" y="119.56" width="3.8" height="3.8" fill="#f2f2f2" stroke="#a8a8a8" stroke-width="0.5"/><rect x="8.9" y="118.56" width="3.3" height="3.5" fill="#2272b4"/><rect x="9.3" y="118.96" width="1.4" height="1.2" fill="#4a9ad0"/><path d="M2.6 123.57 v3.2 h4" stroke="#c8c8c8" stroke-width="0.4" stroke-dasharray="0.5 0.5" fill="none"/><rect x="7.3" y="125.97" width="3.8" height="3.8" fill="#f2f2f2" stroke="#a8a8a8" stroke-width="0.5"/><rect x="8.9" y="124.97" width="3.3" height="3.5" fill="#2272b4"/><rect x="9.3" y="125.37" width="1.4" height="1.2" fill="#4a9ad0"/><path d="M2.6 129.98 v3.2 h4" stroke="#c8c8c8" stroke-width="0.4" stroke-dasharray="0.5 0.5" fill="none"/><rect x="7.3" y="132.38" width="3.8" height="3.8" fill="#f2f2f2" stroke="#a8a8a8" stroke-width="0.5"/><rect x="8.9" y="131.38" width="3.3" height="3.5" fill="#2272b4"/><rect x="9.3" y="131.78" width="1.4" height="1.2" fill="#4a9ad0"/><path d="M2.6 136.39 v3.2 h4" stroke="#c8c8c8" stroke-width="0.4" stroke-dasharray="0.5 0.5" fill="none"/><rect x="7.3" y="138.79" width="3.8" height="3.8" fill="#f2f2f2" stroke="#a8a8a8" stroke-width="0.5"/><rect x="8.9" y="137.79" width="3.3" height="3.5" fill="#2272b4"/><rect x="9.3" y="138.19" width="1.4" height="1.2" fill="#4a9ad0"/><path d="M2.6 142.80 v3.2 h4" stroke="#c8c8c8" stroke-width="0.4" stroke-dasharray="0.5 0.5" fill="none"/><rect x="7.3" y="145.20" width="3.8" height="3.8" fill="#f2f2f2" stroke="#a8a8a8" stroke-width="0.5"/><rect x="8.9" y="144.20" width="3.3" height="3.5" fill="#2272b4"/><rect x="9.3" y="144.60" width="1.4" height="1.2" fill="#4a9ad0"/><path d="M2.6 149.21 v3.2 h4" stroke="#c8c8c8" stroke-width="0.4" stroke-dasharray="0.5 0.5" fill="none"/><circle cx="9.6" cy="152.51" r="2.2" fill="#f2f2f2" stroke="#6c6c6c" stroke-width="1"/><path d="M2.6 155.62 v3.2 h4" stroke="#c8c8c8" stroke-width="0.4" stroke-dasharray="0.5 0.5" fill="none"/><circle cx="9.6" cy="158.92" r="2.2" fill="#f2f2f2" stroke="#6c6c6c" stroke-width="1"/><path d="M2.6 162.03 v3.2 h4" stroke="#c8c8c8" stroke-width="0.4" stroke-dasharray="0.5 0.5" fill="none"/><circle cx="9.6" cy="165.33" r="2.2" fill="#f2f2f2" stroke="#6c6c6c" stroke-width="1"/><path d="M2.6 168.44 v3.2 h4" stroke="#c8c8c8" stroke-width="0.4" stroke-dasharray="0.5 0.5" fill="none"/><circle cx="9.6" cy="171.74" r="2.2" fill="#f2f2f2" stroke="#6c6c6c" stroke-width="1"/><rect x="1.2" y="176.75" width="2.8" height="2.8" fill="#f4f4f8" stroke="#c8c8d4" stroke-width="0.35"/><path d="M1.7 178.15 h1.8 M2.6 177.25 v1.8" stroke="#7a7a90" stroke-width="0.45"/><path d="M4.2 178.05 h2.5" stroke="#c8c8c8" stroke-width="0.4" stroke-dasharray="0.5 0.5"/><circle cx="9.6" cy="178.15" r="2.2" fill="#f2f2f2" stroke="#6c6c6c" stroke-width="1"/><rect x="1.2" y="183.16" width="2.8" height="2.8" fill="#f4f4f8" stroke="#c8c8d4" stroke-width="0.35"/><path d="M1.7 184.56 h1.8 M2.6 183.66 v1.8" stroke="#7a7a90" stroke-width="0.45"/><path d="M4.2 184.46 h2.5" stroke="#c8c8c8" stroke-width="0.4" stroke-dasharray="0.5 0.5"/><circle cx="9.6" cy="184.56" r="2.2" fill="#f2f2f2" stroke="#6c6c6c" stroke-width="1"/><rect x="1.2" y="189.57" width="2.8" height="2.8" fill="#f4f4f8" stroke="#c8c8d4" stroke-width="0.35"/><path d="M1.7 190.97 h1.8 M2.6 190.07 v1.8" stroke="#7a7a90" stroke-width="0.45"/><path d="M4.2 190.87 h2.5" stroke="#c8c8c8" stroke-width="0.4" stroke-dasharray="0.5 0.5"/><circle cx="9.6" cy="190.97" r="2.2" fill="#f2f2f2" stroke="#6c6c6c" stroke-width="1"/><path d="M2.6 194.08 v3.2 h4" stroke="#c8c8c8" stroke-width="0.4" stroke-dasharray="0.5 0.5" fill="none"/><circle cx="9.6" cy="197.38" r="2.2" fill="#f2f2f2" stroke="#6c6c6c" stroke-width="1"/><path d="M2.6 200.49 v3.2 h4" stroke="#c8c8c8" stroke-width="0.4" stroke-dasharray="0.5 0.5" fill="none"/><circle cx="9.6" cy="203.79" r="2.2" fill="#f2f2f2" stroke="#6c6c6c" stroke-width="1"/><rect x="1.2" y="208.80" width="2.8" height="2.8" fill="#f4f4f8" stroke="#c8c8d4" stroke-width="0.35"/><path d="M1.7 210.20 h1.8 M2.6 209.30 v1.8" stroke="#7a7a90" stroke-width="0.45"/><path d="M4.2 210.10 h2.5" stroke="#c8c8c8" stroke-width="0.4" stroke-dasharray="0.5 0.5"/><circle cx="9.6" cy="210.20" r="2.2" fill="#f2f2f2" stroke="#6c6c6c" stroke-width="1"/><rect x="1.2" y="215.21" width="2.8" height="2.8" fill="#f4f4f8" stroke="#c8c8d4" stroke-width="0.35"/><path d="M1.7 216.61 h1.8 M2.6 215.71 v1.8" stroke="#7a7a90" stroke-width="0.45"/><path d="M4.2 216.51 h2.5" stroke="#c8c8c8" stroke-width="0.4" stroke-dasharray="0.5 0.5"/><rect x="7.4" y="214.11" width="5" height="4.8" fill="#dfe7ee" stroke="#557a9c" stroke-width="0.5"/><path d="M7.4 215.71 h5 M7.4 217.31 h5 M9.1 214.11 v4.8 M10.8 214.11 v4.8" stroke="#557a9c" stroke-width="0.35"/><rect x="1.2" y="221.62" width="2.8" height="2.8" fill="#f4f4f8" stroke="#c8c8d4" stroke-width="0.35"/><path d="M1.7 223.02 h1.8 M2.6 222.12 v1.8" stroke="#7a7a90" stroke-width="0.45"/><path d="M4.2 222.92 h2.5" stroke="#c8c8c8" stroke-width="0.4" stroke-dasharray="0.5 0.5"/><rect x="7.4" y="220.52" width="5" height="4.8" fill="#dfe7ee" stroke="#557a9c" stroke-width="0.5"/><path d="M7.4 222.12 h5 M7.4 223.72 h5 M9.1 220.52 v4.8 M10.8 220.52 v4.8" stroke="#557a9c" stroke-width="0.35"/><rect x="1.2" y="228.03" width="2.8" height="2.8" fill="#f4f4f8" stroke="#c8c8d4" stroke-width="0.35"/><path d="M1.7 229.43 h1.8 M2.6 228.53 v1.8" stroke="#7a7a90" stroke-width="0.45"/><path d="M4.2 229.33 h2.5" stroke="#c8c8c8" stroke-width="0.4" stroke-dasharray="0.5 0.5"/><rect x="7.4" y="226.93" width="5" height="4.8" fill="#dfe7ee" stroke="#557a9c" stroke-width="0.5"/><path d="M7.4 228.53 h5 M7.4 230.13 h5 M9.1 226.93 v4.8 M10.8 226.93 v4.8" stroke="#557a9c" stroke-width="0.35"/><rect x="1.2" y="234.44" width="2.8" height="2.8" fill="#f4f4f8" stroke="#c8c8d4" stroke-width="0.35"/><path d="M1.7 235.84 h1.8 M2.6 234.94 v1.8" stroke="#7a7a90" stroke-width="0.45"/><path d="M4.2 235.74 h2.5" stroke="#c8c8c8" stroke-width="0.4" stroke-dasharray="0.5 0.5"/><rect x="7.4" y="233.34" width="5" height="4.8" fill="#dfe7ee" stroke="#557a9c" stroke-width="0.5"/><path d="M7.4 234.94 h5 M7.4 236.54 h5 M9.1 233.34 v4.8 M10.8 233.34 v4.8" stroke="#557a9c" stroke-width="0.35"/><rect x="99.2" y="65" width="6" height="6" fill="#12877a"/><path d="M100.4 69.8 l1.5 -3 l1 2 l1.5 -1.5" stroke="#cfeee8" stroke-width="0.5" fill="none"/><rect x="149.2" y="66" width="4" height="4" fill="#fff" stroke="#777" stroke-width="0.5"/><rect x="164.8" y="65" width="6" height="6" fill="#12877a"/><path d="M166.0 69.8 l1.5 -3 l1 2 l1.5 -1.5" stroke="#cfeee8" stroke-width="0.5" fill="none"/><rect x="224.5" y="66" width="4" height="4" fill="#fff" stroke="#777" stroke-width="0.5"/><rect x="240.3" y="65" width="6" height="6" fill="#12877a"/><path d="M241.5 69.8 l1.5 -3 l1 2 l1.5 -1.5" stroke="#cfeee8" stroke-width="0.5" fill="none"/><rect x="309.8" y="66" width="4" height="4" fill="#fff" stroke="#777" stroke-width="0.5"/><rect x="326.2" y="65" width="6" height="6" fill="#12877a"/><path d="M327.4 69.8 l1.5 -3 l1 2 l1.5 -1.5" stroke="#cfeee8" stroke-width="0.5" fill="none"/><rect x="424.2" y="66" width="4" height="4" fill="#fff" stroke="#777" stroke-width="0.5"/><rect x="439.4" y="65" width="5.8" height="6" fill="#12877a"/><path d="M440.6 69.8 l1.5 -3 l1 2 l1.5 -1.5" stroke="#cfeee8" stroke-width="0.5" fill="none"/><rect x="453.5" y="65.9" width="5.4" height="5.2" fill="#e8603c"/><path d="M455 67.3 l2.4 2.4 M457.4 67.3 l-2.4 2.4" stroke="#fff" stroke-width="0.6"/><path d="M595.3 72 h3.8 l-1.4 1.9 v2.2 l-1 -0.6 v-1.6 z" fill="none" stroke="#777" stroke-width="0.5"/><path d="M597.8 82.30 h3.2" stroke="#555" stroke-width="0.9"/><path d="M596.8 82.30 l1.4 -1.2 v2.4z" fill="#555"/><path d="M597.8 89.53 h3.2" stroke="#555" stroke-width="0.9"/><path d="M596.8 89.53 l1.4 -1.2 v2.4z" fill="#555"/><path d="M597.8 96.76 h3.2" stroke="#555" stroke-width="0.9"/><path d="M596.8 96.76 l1.4 -1.2 v2.4z" fill="#555"/><path d="M597.8 103.99 h3.2" stroke="#555" stroke-width="0.9"/><path d="M596.8 103.99 l1.4 -1.2 v2.4z" fill="#555"/><path d="M597.8 111.22 h3.2" stroke="#555" stroke-width="0.9"/><path d="M596.8 111.22 l1.4 -1.2 v2.4z" fill="#555"/><path d="M597.8 118.45 h3.2" stroke="#555" stroke-width="0.9"/><path d="M596.8 118.45 l1.4 -1.2 v2.4z" fill="#555"/><path d="M597.8 125.68 h3.2" stroke="#555" stroke-width="0.9"/><path d="M596.8 125.68 l1.4 -1.2 v2.4z" fill="#555"/><path d="M597.8 132.91 h3.2" stroke="#555" stroke-width="0.9"/><path d="M596.8 132.91 l1.4 -1.2 v2.4z" fill="#555"/><path d="M597.8 140.14 h3.2" stroke="#555" stroke-width="0.9"/><path d="M596.8 140.14 l1.4 -1.2 v2.4z" fill="#555"/><circle cx="98.7" cy="355.9" r="2.1" fill="#fff" stroke="#333" stroke-width="0.8"/><path d="M107.8 357.8 L109.9 353.9 L112 357.8z" fill="#8c8c8c"/><circle cx="120.7" cy="355.9" r="2.1" fill="#f4f4f4" stroke="#999" stroke-width="0.6"/><path d="M120.7 355.2 v2" stroke="#888" stroke-width="0.6"/><rect x="132.6" y="354" width="4" height="3.8" fill="#888"/><path d="M132.6 355 h4 M132.6 356 h4 M132.6 357 h4" stroke="#ccc" stroke-width="0.3"/><circle cx="445.4" cy="401.3" r="1.3" fill="none" stroke="#2f5f8c" stroke-width="1"/><path d="M444.5 402.3 l-1.5 1.6" stroke="#2f5f8c" stroke-width="1"/><path d="M454.4 402.3 h4.2 M456.5 400.2 v4.2" stroke="#2f5f8c" stroke-width="1.1"/><path d="M468 400.6 A1.8 1.8 0 1 0 468.2 403.4" fill="none" stroke="#2f5f8c" stroke-width="1"/><path d="M467.4 399.6 l1.4 1 l-1.4 0.8z" fill="#2f5f8c"/><path d="M476 404 v-4 h1.6 a1.2 1.2 0 0 1 0 2.4 h-1.6" fill="none" stroke="#2f5f8c" stroke-width="1"/><path d="M487.4 399.8 l1.6 2.2 l-1.6 2.2 l-1.6 -2.2z" fill="none" stroke="#2f5f8c" stroke-width="0.7"/><circle cx="487.4" cy="402" r="0.5" fill="#2f5f8c"/><circle cx="502.6" cy="401.3" r="1.3" fill="none" stroke="#2f5f8c" stroke-width="1"/><path d="M501.7 402.3 l-1.5 1.6" stroke="#2f5f8c" stroke-width="1"/><rect x="510.6" y="400.5" width="1.2" height="3" fill="#2f5f8c"/><rect x="512.4" y="399.8" width="1.2" height="3.7" fill="#2f5f8c"/><path d="M522.8 400 h3.6 v2 a1.8 1.8 0 0 1 -3.6 0z" fill="#2f5f8c"/><path d="M524.5 400 h3.2 v2 a1.6 1.6 0 0 1 -3.2 0z" fill="#3f6d98"/><rect x="541" y="399.8" width="4" height="3.5" fill="#5a6a7a"/><rect x="542.5" y="401.5" width="2.5" height="2.5" fill="#3f88c8"/></svg>
</div></body></html>
